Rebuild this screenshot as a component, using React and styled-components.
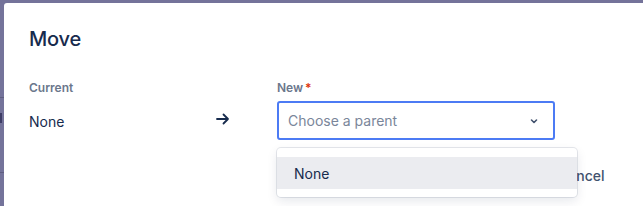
import React from 'react'
import styled, { createGlobalStyle } from 'styled-components'

const GlobalStyle = createGlobalStyle`
  html, body {
    margin: 0;
    padding: 0;
    overflow: hidden;
    background: #74739a;
    font-family: Inter, "Noto Sans", sans-serif;
  }
`;

function ArrowRight() {
  return (
    <svg width="16" height="16" viewBox="0 0 16 16" fill="none">
      <path d="M2 8h11M8.5 3.5 13 8l-4.5 4.5" stroke="#172B4D" strokeWidth="1.8" strokeLinecap="round" strokeLinejoin="round"/>
    </svg>
  )
}

function Chevron() {
  return (
    <svg width="10" height="10" viewBox="0 0 10 10" fill="none">
      <path d="M2.5 4 5 6.5 7.5 4" stroke="#42526E" strokeWidth="1.6" strokeLinecap="round" strokeLinejoin="round"/>
    </svg>
  )
}

function App() {
  return (
    <Page>
      <GlobalStyle/>
      <Backdrop>
        <Line top={97}/>
        <Mark/>
        <Line top={172}/>
      </Backdrop>
      <Modal>
        <Title>Move</Title>
        <Row>
          <Column width={186}>
            <Label>Current</Label>
            <Value>None</Value>
          </Column>
          <ArrowBox>
            <ArrowRight/>
          </ArrowBox>
          <Column width={278}>
            <Label>New<Required>*</Required></Label>
            <Select>
              <Placeholder>Choose a parent</Placeholder>
              <Chevron/>
            </Select>
          </Column>
        </Row>
        <Footer>
          <CancelButton>Cancel</CancelButton>
          <Menu>
            <MenuItem active>None</MenuItem>
          </Menu>
        </Footer>
      </Modal>
    </Page>
  )
}

const Page = styled.div`
  display: flex;
  align-items: flex-start;
  height: 206px;
  width: 643px;
  overflow: hidden;
`;

const Backdrop = styled.div`
  position: relative;
  width: 4px;
  height: 206px;
  flex-shrink: 0;
`;

const Line = styled.div`
  position: absolute;
  left: 0;
  top: ${p => p.top}px;
  width: 4px;
  height: 1px;
  background: #5f5e80;
`;

const Mark = styled.div`
  position: absolute;
  left: 0;
  top: 113px;
  width: 2px;
  height: 10px;
  background: #3e3d66;
`;

const Modal = styled.div`
  margin-top: 3px;
  width: 720px;
  height: 240px;
  flex-shrink: 0;
  background: #fff;
  border-radius: 3px 0 0 0;
  padding: 24px 0 0 25px;
  box-sizing: border-box;
  color: #172B4D;
`;

const Title = styled.h1`
  margin: 0;
  font-size: 20px;
  font-weight: 500;
  line-height: 24px;
  color: #172B4D;
  letter-spacing: -0.2px;
`;

const Row = styled.div`
  display: flex;
  align-items: flex-start;
  margin-top: 29px;
`;

const Column = styled.div`
  display: flex;
  flex-direction: column;
  width: ${p => p.width}px;
`;

const Label = styled.div`
  font-size: 12px;
  font-weight: 600;
  line-height: 16px;
  color: #6B778C;
  height: 16px;
`;

const Required = styled.span`
  color: #DE350B;
  margin-left: 2px;
`;

const Value = styled.div`
  font-size: 14px;
  line-height: 20px;
  margin-top: 16px;
  color: #172B4D;
`;

const ArrowBox = styled.div`
  display: flex;
  width: 62px;
  padding-top: 31px;
`;

const Select = styled.div`
  display: flex;
  align-items: center;
  justify-content: space-between;
  margin-top: 5px;
  height: 39px;
  box-sizing: border-box;
  border: 2px solid #4C7BF4;
  border-radius: 3px;
  padding: 0 14px 0 9px;
`;

const Placeholder = styled.span`
  font-size: 14px;
  color: #7A869A;
`;

const Footer = styled.div`
  position: relative;
  display: flex;
  padding-left: 521px;
  margin-top: 19px;
`;

const CancelButton = styled.button`
  background: none;
  border: none;
  padding: 0 8px;
  height: 32px;
  font-family: inherit;
  font-size: 14px;
  font-weight: 500;
  color: #42526E;
`;

const Menu = styled.div`
  position: absolute;
  left: 248px;
  top: -11px;
  width: 300px;
  background: #fff;
  border-radius: 4px;
  padding: 9px 0 8px;
  box-shadow: 0 0 0 1px rgba(9, 30, 66, 0.1), 0 4px 11px rgba(9, 30, 66, 0.1);
`;

const MenuItem = styled.div`
  height: 32px;
  display: flex;
  align-items: center;
  padding-left: 17px;
  font-size: 14px;
  color: #172B4D;
  background: ${p => (p.active ? '#EBECF0' : 'transparent')};
`;

export default App
